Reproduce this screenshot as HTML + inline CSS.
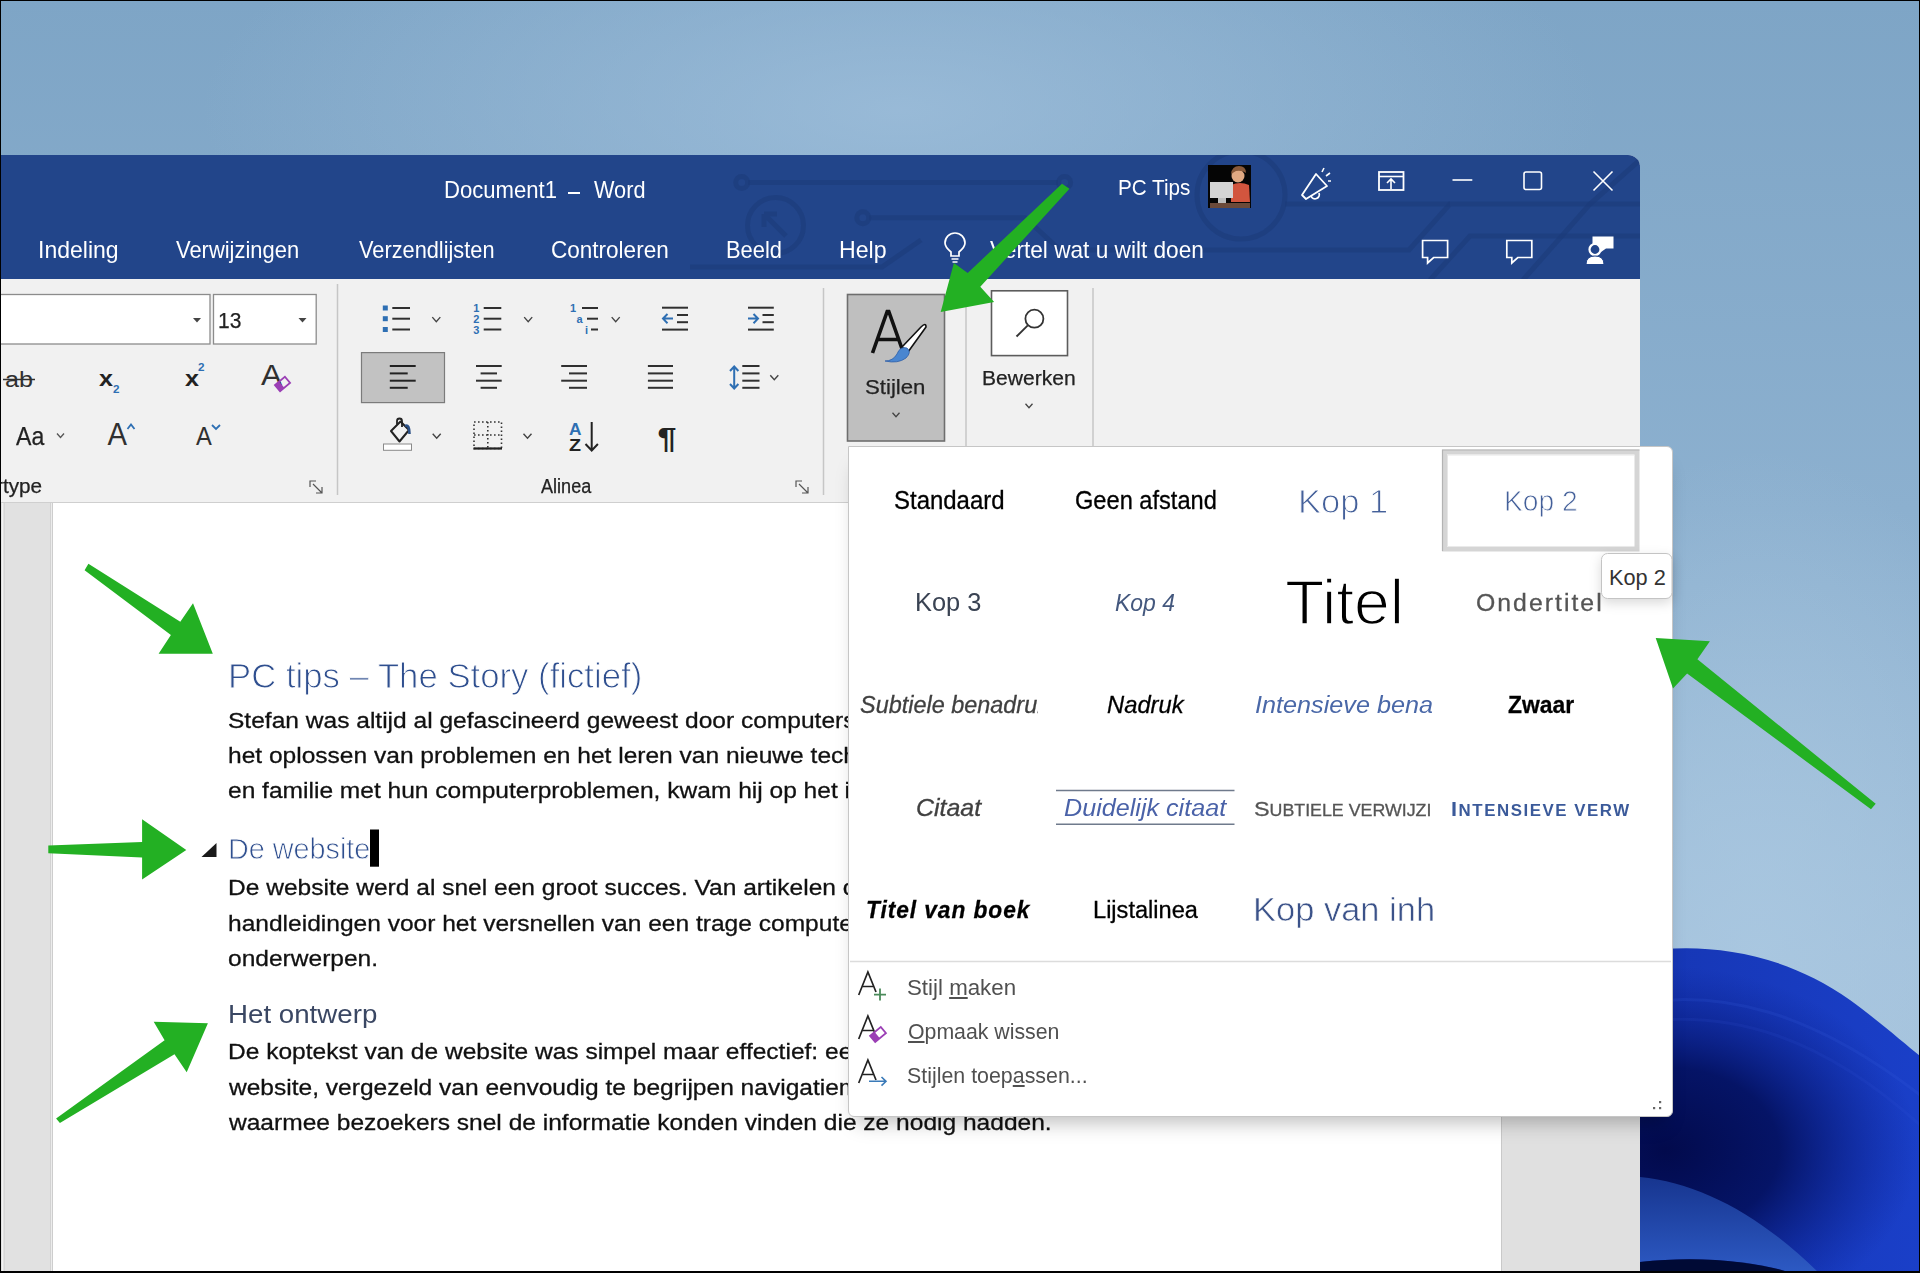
<!DOCTYPE html><html><head><meta charset="utf-8"><style>
html,body{margin:0;padding:0;width:1920px;height:1273px;overflow:hidden;position:relative;font-family:'Liberation Sans',sans-serif;}
div{box-sizing:border-box;}
</style></head><body>
<div style="position:absolute;left:0;top:0;width:1920px;height:1273px;background:
radial-gradient(ellipse 700px 260px at 900px 110px, rgba(160,192,220,0.75), rgba(160,192,220,0) 100%),
radial-gradient(ellipse 300px 500px at 1760px 950px, rgba(170,200,225,0.8), rgba(170,200,225,0) 100%),
linear-gradient(180deg, #7ea5c6 0%, #8cb0cf 40%, #a3c1db 75%, #a8c4dd 100%);"></div>
<svg style="position:absolute;left:0;top:0" width="1920" height="1273" viewBox="0 0 1920 1273">
<defs>
<linearGradient id="bl1" x1="0" y1="0" x2="1" y2="0"><stop offset="0" stop-color="#1636b4"/><stop offset="1" stop-color="#1a3fc8"/></linearGradient>
<radialGradient id="bl2" cx="1665" cy="1150" r="230" gradientUnits="userSpaceOnUse" gradientTransform="translate(1665 1150) scale(1.1 0.8) translate(-1665 -1150)"><stop offset="0" stop-color="#020a4c"/><stop offset="0.45" stop-color="#041262" stop-opacity="0.95"/><stop offset="1" stop-color="#0a2090" stop-opacity="0"/></radialGradient>
<linearGradient id="bl3" x1="0" y1="0" x2="0" y2="1"><stop offset="0" stop-color="#17358f"/><stop offset="1" stop-color="#2d5ac4"/></linearGradient>
</defs>
<path d="M1640 952 C1700 942 1780 950 1850 1000 C1880 1022 1905 1044 1920 1056 L1920 1273 L1640 1273 Z" fill="url(#bl1)"/>
<path d="M1640 952 C1700 942 1780 950 1850 1000 C1880 1022 1905 1044 1920 1056 L1920 1273 L1640 1273 Z" fill="url(#bl2)"/>
<path d="M1640 1003 C1720 990 1810 1010 1920 1095" fill="none" stroke="#3a5ee0" stroke-opacity="0.18" stroke-width="3"/>
<path d="M1640 1022 C1730 1010 1820 1035 1920 1125" fill="none" stroke="#3a5ee0" stroke-opacity="0.12" stroke-width="3"/>
<path d="M1640 1177 C1700 1183 1760 1215 1819 1273 L1791 1273 C1760 1262 1700 1255 1640 1262 Z" fill="url(#bl3)"/>
<path d="M1640 1262 C1700 1255 1760 1262 1791 1273 L1640 1273 Z" fill="#000a35"/>
</svg>
<div style="position:absolute;left:-20px;top:155px;width:1660px;height:1200px;border-top-right-radius:12px;overflow:hidden;background:#f1f1f1;">
<div style="position:absolute;left:0;top:0;width:1660px;height:124px;background:#22458a;"></div>
<svg style="position:absolute;left:0;top:0;overflow:hidden" width="1660" height="124" viewBox="0 0 1660 124"><g transform="translate(20,-155)"><path d="M748 182.6 L1058 182.6" fill="none" stroke="#1b3a78" stroke-opacity="0.55" stroke-width="5"/><circle cx="741.7" cy="182.6" r="6" fill="none" stroke="#1b3a78" stroke-opacity="0.55" stroke-width="5"/><circle cx="1064.6" cy="182.6" r="6" fill="none" stroke="#1b3a78" stroke-opacity="0.55" stroke-width="5"/><path d="M869 217.7 L1025 217.7 L1060 250 L1409 250 L1450 204 L1640 204" fill="none" stroke="#1b3a78" stroke-opacity="0.55" stroke-width="5"/><circle cx="862.8" cy="217.7" r="6" fill="none" stroke="#1b3a78" stroke-opacity="0.55" stroke-width="5"/><circle cx="775.5" cy="225.5" r="28" fill="none" stroke="#1b3a78" stroke-opacity="0.55" stroke-width="5"/><path d="M764 214 L786 236 M764 214 L764 227 M764 214 L777 214" fill="none" stroke="#1b3a78" stroke-opacity="0.55" stroke-width="5"/><circle cx="1241" cy="195" r="44" fill="none" stroke="#1b3a78" stroke-opacity="0.55" stroke-width="5"/><path d="M1285 204 L1450 204" fill="none" stroke="#1b3a78" stroke-opacity="0.55" stroke-width="5"/><path d="M690 267 L882 267 L921 240" fill="none" stroke="#1b3a78" stroke-opacity="0.55" stroke-width="5"/><path d="M1523 280 L1590 204 L1640 160" fill="none" stroke="#1b3a78" stroke-opacity="0.55" stroke-width="5"/><path d="M1430 280 L1470 236 L1640 236" fill="none" stroke="#1b3a78" stroke-opacity="0.55" stroke-width="5"/></g></svg>
<div style="position:absolute;left:0;top:347px;width:1660px;height:1px;background:#cfcfcf;"></div>
<div style="position:absolute;left:0;top:348px;width:73px;height:900px;background:#e1e1e1;"></div>
<div style="position:absolute;left:72px;top:348px;width:1px;height:900px;background:#cdcdcd;"></div>
<div style="position:absolute;left:22px;top:348px;width:1px;height:900px;background:#f2f2f2;"></div>
<div style="position:absolute;left:24px;top:348px;width:1px;height:900px;background:#d6d6d6;"></div>
<div style="position:absolute;left:70px;top:348px;width:1px;height:900px;background:#d2d2d2;"></div>
<div style="position:absolute;left:71px;top:348px;width:1px;height:900px;background:#ececec;"></div>
<div style="position:absolute;left:73px;top:348px;width:1449px;height:900px;background:#fff;"></div>
<div style="position:absolute;left:1521px;top:348px;width:1px;height:900px;background:#c9c9c9;"></div>
<div style="position:absolute;left:1522px;top:348px;width:140px;height:900px;background:#e0e0e0;"></div>
</div>
<svg style="position:absolute;left:0;top:0;overflow:visible" width="1920" height="1273" viewBox="0 0 1920 1273"><rect x="1208" y="165" width="43" height="43" fill="#050505"/><rect x="1210" y="203" width="40" height="5" fill="#6b4a3a"/><path d="M1231 185 Q1240 181 1249 185 L1250 202 L1231 202 Z" fill="#d2553e"/><circle cx="1238" cy="176" r="6.5" fill="#e0a882"/><path d="M1231 174 Q1232 166 1239 166 Q1246 166 1246 173 Q1242 170 1236 171 Z" fill="#8a5a3a"/><rect x="1210" y="182" width="23" height="16" fill="#d4d4d4"/><rect x="1218" y="198" width="8" height="5" fill="#bdbdbd"/><path d="M1302 195 L1316 174 L1327 186 L1306 199 Z" fill="none" stroke="#ffffff" stroke-width="1.8" stroke-linejoin="round"/><path d="M1311 196 A4 4 0 0 0 1319 193" fill="none" stroke="#ffffff" stroke-width="1.8"/><path d="M1322 172 L1324 168 M1326 176 L1330 173 M1328 181 L1331 181" stroke="#ffffff" stroke-width="1.6"/><rect x="1379" y="172" width="24.5" height="18" fill="none" stroke="#ffffff" stroke-width="1.8"/><line x1="1379" y1="176.5" x2="1403.5" y2="176.5" stroke="#ffffff" stroke-width="1.6"/><path d="M1391 189 L1391 179 M1387 183 L1391 179 L1395 183" fill="none" stroke="#ffffff" stroke-width="1.6"/><line x1="1452.5" y1="180" x2="1472.3" y2="180" stroke="#ffffff" stroke-width="1.6"/><rect x="1524" y="172" width="17.5" height="17.5" rx="2" fill="none" stroke="#ffffff" stroke-width="1.6"/><path d="M1593.5 171.5 L1612.5 190.5 M1612.5 171.5 L1593.5 190.5" stroke="#ffffff" stroke-width="1.6"/><path d="M1422.6 240.5 L1447.6 240.5 L1447.6 257.5 L1433.6 257.5 L1427.6 263 L1427.6 257.5 L1422.6 257.5 Z" fill="none" stroke="#ffffff" stroke-width="1.7" stroke-linejoin="miter"/><path d="M1506.8 240.5 L1531.8 240.5 L1531.8 257.5 L1517.8 257.5 L1511.8 263 L1511.8 257.5 L1506.8 257.5 Z" fill="none" stroke="#ffffff" stroke-width="1.7" stroke-linejoin="miter"/><path d="M1592.5 236.5 L1613.5 236.5 L1613.5 248.5 L1606 248.5 L1601 252 L1601 248.5 L1592.5 248.5 Z" fill="#ffffff"/><circle cx="1595" cy="249.5" r="5.5" fill="#22458a" stroke="#ffffff" stroke-width="2.2"/><path d="M1586 264.5 Q1586 256 1595 256 Q1604 256 1604 264.5 Z" fill="#ffffff" stroke="#22458a" stroke-width="1"/><path d="M951 256 L951 252 Q945 247 945 243 A10 10 0 0 1 965 243 Q965 247 959 252 L959 256 Z" fill="none" stroke="#ffffff" stroke-width="1.7"/><line x1="951.5" y1="259" x2="958.5" y2="259" stroke="#ffffff" stroke-width="1.5"/><line x1="952.5" y1="262" x2="957.5" y2="262" stroke="#ffffff" stroke-width="1.5"/><rect x="-2" y="294.5" width="212" height="49.5" fill="#fff" stroke="#8c8c8c" stroke-width="1.3"/><rect x="213.5" y="294.5" width="102.7" height="49.5" fill="#fff" stroke="#8c8c8c" stroke-width="1.3"/><path d="M193 318 L201 318 L197 322.5 Z" fill="#444"/><path d="M298.5 318 L306.5 318 L302.5 322.5 Z" fill="#444"/><line x1="337.5" y1="284" x2="337.5" y2="495" stroke="#c6c6c6" stroke-width="1.5"/><line x1="823.5" y1="288" x2="823.5" y2="495" stroke="#c6c6c6" stroke-width="1.5"/><line x1="966" y1="288" x2="966" y2="446" stroke="#c6c6c6" stroke-width="1.5"/><line x1="1093" y1="288" x2="1093" y2="446" stroke="#c6c6c6" stroke-width="1.5"/><text x="5" y="386.5" font-family="Liberation Sans" font-size="22" fill="#303030" font-weight="normal" font-style="normal" text-anchor="start" textLength="28" lengthAdjust="spacingAndGlyphs">ab</text><line x1="3" y1="379.5" x2="35" y2="379.5" stroke="#303030" stroke-width="1.5"/><text x="99" y="386" font-family="Liberation Sans" font-size="22" fill="#222" font-weight="bold" font-style="normal" text-anchor="start" textLength="14" lengthAdjust="spacingAndGlyphs">x</text><text x="113" y="393" font-family="Liberation Sans" font-size="11" fill="#2e6fb3" font-weight="bold" font-style="normal" text-anchor="start" textLength="6.5" lengthAdjust="spacingAndGlyphs">2</text><text x="185" y="386" font-family="Liberation Sans" font-size="22" fill="#222" font-weight="bold" font-style="normal" text-anchor="start" textLength="14" lengthAdjust="spacingAndGlyphs">x</text><text x="198" y="371" font-family="Liberation Sans" font-size="11" fill="#2e6fb3" font-weight="bold" font-style="normal" text-anchor="start" textLength="6.5" lengthAdjust="spacingAndGlyphs">2</text><text x="261" y="385" font-family="Liberation Sans" font-size="29" fill="#303030" font-weight="normal" font-style="normal" text-anchor="start" textLength="21" lengthAdjust="spacingAndGlyphs">A</text><g transform="translate(282.5 384) rotate(-40)"><rect x="-6.5" y="-4" width="13" height="8" fill="none" stroke="#9b3fb5" stroke-width="1.8"/><rect x="-6.5" y="-4" width="5.5" height="8" fill="#9b3fb5"/></g><path d="M57.0 433.5 L60.5 437.5 L64.0 433.5" fill="none" stroke="#555" stroke-width="1.3"/><text x="107.5" y="445.3" font-family="Liberation Sans" font-size="32" fill="#303030" font-weight="normal" font-style="normal" text-anchor="start" textLength="19.5" lengthAdjust="spacingAndGlyphs">A</text><path d="M127.5 429 L131 424.5 L134.5 429" fill="none" stroke="#2e6fb3" stroke-width="1.8"/><text x="196" y="445.3" font-family="Liberation Sans" font-size="26" fill="#303030" font-weight="normal" font-style="normal" text-anchor="start" textLength="15.8" lengthAdjust="spacingAndGlyphs">A</text><path d="M212 425 L216 429 L220 425" fill="none" stroke="#2e6fb3" stroke-width="1.8"/><path d="M310 487 L310 481 L316 481 M313 484 L322 493 M322 487 L322 493 L316 493" fill="none" stroke="#555" stroke-width="1.2"/><path d="M796 487 L796 481 L802 481 M799 484 L808 493 M808 487 L808 493 L802 493" fill="none" stroke="#555" stroke-width="1.2"/><rect x="382.8" y="305.5" width="5" height="5" fill="#2e6fb3"/><line x1="392.3" y1="308" x2="410" y2="308" stroke="#303030" stroke-width="2"/><rect x="382.8" y="316.2" width="5" height="5" fill="#2e6fb3"/><line x1="392.3" y1="318.7" x2="410" y2="318.7" stroke="#303030" stroke-width="2"/><rect x="382.8" y="327.0" width="5" height="5" fill="#2e6fb3"/><line x1="392.3" y1="329.5" x2="410" y2="329.5" stroke="#303030" stroke-width="2"/><path d="M432.3 317.15 L436.3 321.65 L440.3 317.15" fill="none" stroke="#444" stroke-width="1.4"/><text x="476.3" y="312" font-family="Liberation Sans" font-size="11" fill="#2e6fb3" font-weight="bold" font-style="normal" text-anchor="middle">1</text><line x1="483.7" y1="308" x2="501.3" y2="308" stroke="#303030" stroke-width="2"/><text x="476.3" y="322.7" font-family="Liberation Sans" font-size="11" fill="#2e6fb3" font-weight="bold" font-style="normal" text-anchor="middle">2</text><line x1="483.7" y1="318.7" x2="501.3" y2="318.7" stroke="#303030" stroke-width="2"/><text x="476.3" y="333.5" font-family="Liberation Sans" font-size="11" fill="#2e6fb3" font-weight="bold" font-style="normal" text-anchor="middle">3</text><line x1="483.7" y1="329.5" x2="501.3" y2="329.5" stroke="#303030" stroke-width="2"/><path d="M524.2 317.15 L528.2 321.65 L532.2 317.15" fill="none" stroke="#444" stroke-width="1.4"/><text x="573" y="312" font-family="Liberation Sans" font-size="11" fill="#2e6fb3" font-weight="bold" font-style="normal" text-anchor="middle">1</text><text x="579.6" y="322.5" font-family="Liberation Sans" font-size="11" fill="#2e6fb3" font-weight="bold" font-style="normal" text-anchor="middle">a</text><text x="586.6" y="333.5" font-family="Liberation Sans" font-size="11" fill="#2e6fb3" font-weight="bold" font-style="normal" text-anchor="middle">i</text><line x1="582" y1="308" x2="598" y2="308" stroke="#303030" stroke-width="2"/><line x1="587" y1="318.7" x2="598" y2="318.7" stroke="#303030" stroke-width="2"/><line x1="591" y1="329.5" x2="598" y2="329.5" stroke="#303030" stroke-width="2"/><path d="M611.7 317.15 L615.7 321.65 L619.7 317.15" fill="none" stroke="#444" stroke-width="1.4"/><line x1="662" y1="307.7" x2="688" y2="307.7" stroke="#303030" stroke-width="2"/><line x1="677" y1="315" x2="688" y2="315" stroke="#303030" stroke-width="2"/><line x1="677" y1="322.2" x2="688" y2="322.2" stroke="#303030" stroke-width="2"/><line x1="662" y1="329.6" x2="688" y2="329.6" stroke="#303030" stroke-width="2"/><line x1="748" y1="307.7" x2="773.8" y2="307.7" stroke="#303030" stroke-width="2"/><line x1="762.5" y1="315" x2="773.8" y2="315" stroke="#303030" stroke-width="2"/><line x1="762.5" y1="322.2" x2="773.8" y2="322.2" stroke="#303030" stroke-width="2"/><line x1="748" y1="329.6" x2="773.8" y2="329.6" stroke="#303030" stroke-width="2"/><path d="M673 318.6 L663 318.6 M667.5 314 L663 318.6 L667.5 323.2" fill="none" stroke="#2e6fb3" stroke-width="2"/><path d="M748 318.6 L758 318.6 M753.5 314 L758 318.6 L753.5 323.2" fill="none" stroke="#2e6fb3" stroke-width="2"/><rect x="361.5" y="352.6" width="83" height="50" fill="#c2c2c2" stroke="#7b7b7b" stroke-width="1.2"/><line x1="389.8" y1="366" x2="415.7" y2="366" stroke="#222" stroke-width="2"/><line x1="476" y1="366" x2="501.7" y2="366" stroke="#303030" stroke-width="2"/><line x1="561.2" y1="366" x2="587" y2="366" stroke="#303030" stroke-width="2"/><line x1="647.9" y1="366" x2="673" y2="366" stroke="#303030" stroke-width="2"/><line x1="742.3" y1="366" x2="759.5" y2="366" stroke="#303030" stroke-width="2"/><line x1="389.8" y1="373.4" x2="407.7" y2="373.4" stroke="#222" stroke-width="2"/><line x1="480.6" y1="373.4" x2="497" y2="373.4" stroke="#303030" stroke-width="2"/><line x1="569" y1="373.4" x2="587" y2="373.4" stroke="#303030" stroke-width="2"/><line x1="647.9" y1="373.4" x2="673" y2="373.4" stroke="#303030" stroke-width="2"/><line x1="742.3" y1="373.4" x2="759.5" y2="373.4" stroke="#303030" stroke-width="2"/><line x1="389.8" y1="380.7" x2="415.7" y2="380.7" stroke="#222" stroke-width="2"/><line x1="476" y1="380.7" x2="501.7" y2="380.7" stroke="#303030" stroke-width="2"/><line x1="561.2" y1="380.7" x2="587" y2="380.7" stroke="#303030" stroke-width="2"/><line x1="647.9" y1="380.7" x2="673" y2="380.7" stroke="#303030" stroke-width="2"/><line x1="742.3" y1="380.7" x2="759.5" y2="380.7" stroke="#303030" stroke-width="2"/><line x1="389.8" y1="387.8" x2="407.7" y2="387.8" stroke="#222" stroke-width="2"/><line x1="480.6" y1="387.8" x2="497" y2="387.8" stroke="#303030" stroke-width="2"/><line x1="569" y1="387.8" x2="587" y2="387.8" stroke="#303030" stroke-width="2"/><line x1="647.9" y1="387.8" x2="673" y2="387.8" stroke="#303030" stroke-width="2"/><line x1="742.3" y1="387.8" x2="759.5" y2="387.8" stroke="#303030" stroke-width="2"/><path d="M734.2 367 L734.2 388 M730 371 L734.2 366.5 L738.4 371 M730 384 L734.2 388.5 L738.4 384" fill="none" stroke="#2e6fb3" stroke-width="2"/><path d="M770.3 375.25 L774.3 379.75 L778.3 375.25" fill="none" stroke="#444" stroke-width="1.4"/><path d="M391 431 L400.5 421.5 L409 430 L399.5 441.5 Z" fill="none" stroke="#222" stroke-width="2" stroke-linejoin="round"/><path d="M397 424.5 L397 421 Q397 418.5 399.5 418.5 Q402 418.5 402 421 L402 427" fill="none" stroke="#222" stroke-width="1.8"/><path d="M405 426 Q409.5 424 409.5 434" fill="none" stroke="#2a4f85" stroke-width="2.6"/><rect x="383.5" y="444" width="28" height="6.3" fill="#fff" stroke="#8a8a8a" stroke-width="1"/><path d="M432.7 433.75 L436.7 438.25 L440.7 433.75" fill="none" stroke="#444" stroke-width="1.4"/><rect x="474" y="422" width="27.5" height="26.5" fill="none" stroke="#333" stroke-width="1.6" stroke-dasharray="1.6 2.4"/><path d="M487.8 422 L487.8 448 M474 435 L501.5 435" fill="none" stroke="#333" stroke-width="1.6" stroke-dasharray="1.6 2.4"/><line x1="473.5" y1="448.5" x2="502" y2="448.5" stroke="#222" stroke-width="2.2"/><path d="M523.5 433.75 L527.5 438.25 L531.5 433.75" fill="none" stroke="#444" stroke-width="1.4"/><text x="569" y="434.5" font-family="Liberation Sans" font-size="16" fill="#2e6fb3" font-weight="bold" font-style="normal" text-anchor="start" textLength="12.5" lengthAdjust="spacingAndGlyphs">A</text><text x="569" y="451" font-family="Liberation Sans" font-size="17" fill="#222" font-weight="bold" font-style="normal" text-anchor="start" textLength="12" lengthAdjust="spacingAndGlyphs">Z</text><path d="M591.7 422 L591.7 450.5 M585.5 444 L591.7 450.5 L597.9 444" fill="none" stroke="#222" stroke-width="2"/><text x="657.5" y="447.5" font-family="Liberation Sans" font-size="29" fill="#222" font-weight="bold" font-style="normal" text-anchor="start" textLength="19" lengthAdjust="spacingAndGlyphs">¶</text><rect x="847.5" y="294.5" width="97" height="146.5" fill="#bfbfbf" stroke="#6e6e6e" stroke-width="1.6"/><path d="M872.5 353 L887.2 311.5 L888.8 311.5 L903.5 353 M877.5 339.5 L898.5 339.5" fill="none" stroke="#111" stroke-width="3.6" stroke-linejoin="miter"/><path d="M902 347 L921 327 Q926 322 926 327 L908 352 Z" fill="#fff" stroke="#111" stroke-width="1.6" stroke-linejoin="round"/><path d="M885 361 Q893 361 897 354 Q900 346 907 348 Q912 352 906 358 Q898 364 885 361 Z" fill="#4a86d0" stroke="#2f5fa8" stroke-width="0.8"/><path d="M892.5 412.8 L896 416.8 L899.5 412.8" fill="none" stroke="#444" stroke-width="1.3"/><rect x="991.5" y="290.8" width="76" height="64.8" fill="#fff" stroke="#5c5c5c" stroke-width="1.6"/><circle cx="1034.4" cy="318.7" r="9" fill="none" stroke="#333" stroke-width="1.8"/><line x1="1027.8" y1="325.3" x2="1016.5" y2="336.5" stroke="#333" stroke-width="1.9"/><path d="M1025.5 403.8 L1029 407.8 L1032.5 403.8" fill="none" stroke="#444" stroke-width="1.3"/><rect x="568" y="192" width="12" height="2" fill="#fff"/></svg>
<div style="position:absolute;left:443.69px;top:179.29px;font-size:23.19px;line-height:1;white-space:nowrap;transform-origin:0 0;transform:scaleX(0.9534);color:#fff;">Document1</div>
<div style="position:absolute;left:594.40px;top:179.29px;font-size:23.19px;line-height:1;white-space:nowrap;transform-origin:0 0;transform:scaleX(0.9370);color:#fff;">Word</div>
<div style="position:absolute;left:1117.96px;top:176.91px;font-size:22.46px;line-height:1;white-space:nowrap;transform-origin:0 0;transform:scaleX(0.9211);color:#fff;">PC Tips</div>
<div style="position:absolute;left:37.52px;top:239.29px;font-size:23.19px;line-height:1;white-space:nowrap;transform-origin:0 0;transform:scaleX(0.9923);color:#fff;">Indeling</div>
<div style="position:absolute;left:176.00px;top:239.29px;font-size:23.19px;line-height:1;white-space:nowrap;transform-origin:0 0;transform:scaleX(0.9457);color:#fff;">Verwijzingen</div>
<div style="position:absolute;left:358.50px;top:239.29px;font-size:23.19px;line-height:1;white-space:nowrap;transform-origin:0 0;transform:scaleX(0.9385);color:#fff;">Verzendlijsten</div>
<div style="position:absolute;left:551.03px;top:239.29px;font-size:23.19px;line-height:1;white-space:nowrap;transform-origin:0 0;transform:scaleX(0.9714);color:#fff;">Controleren</div>
<div style="position:absolute;left:725.91px;top:239.29px;font-size:23.19px;line-height:1;white-space:nowrap;transform-origin:0 0;transform:scaleX(0.9446);color:#fff;">Beeld</div>
<div style="position:absolute;left:838.80px;top:239.29px;font-size:23.19px;line-height:1;white-space:nowrap;transform-origin:0 0;transform:scaleX(0.9978);color:#fff;">Help</div>
<div style="position:absolute;left:990.00px;top:239.29px;font-size:23.19px;line-height:1;white-space:nowrap;transform-origin:0 0;transform:scaleX(0.9761);color:#fff;">Vertel wat u wilt doen</div>
<div style="position:absolute;left:217.66px;top:310.03px;font-size:22.32px;line-height:1;white-space:nowrap;transform-origin:0 0;transform:scaleX(0.9435);color:#222;-webkit-text-stroke:0.25px #222;">13</div>
<div style="position:absolute;left:-4.06px;top:476.87px;font-size:19.57px;line-height:1;white-space:nowrap;transform-origin:0 0;transform:scaleX(1.0595);color:#222;-webkit-text-stroke:0.25px #222;">rtype</div>
<div style="position:absolute;left:540.50px;top:476.87px;font-size:19.57px;line-height:1;white-space:nowrap;transform-origin:0 0;transform:scaleX(0.9236);color:#222;-webkit-text-stroke:0.25px #222;">Alinea</div>
<div style="position:absolute;left:865.24px;top:376.14px;font-size:21.01px;line-height:1;white-space:nowrap;transform-origin:0 0;transform:scaleX(1.0564);color:#222;-webkit-text-stroke:0.25px #222;">Stijlen</div>
<div style="position:absolute;left:982.26px;top:368.15px;font-size:20.29px;line-height:1;white-space:nowrap;transform-origin:0 0;transform:scaleX(1.0382);color:#222;-webkit-text-stroke:0.25px #222;">Bewerken</div>
<div style="position:absolute;left:16.30px;top:422.76px;font-size:26.52px;line-height:1;white-space:nowrap;transform-origin:0 0;transform:scaleX(0.8697);color:#222;-webkit-text-stroke:0.25px #222;">Aa</div>
<div style="position:absolute;left:227.88px;top:658.70px;font-size:35.65px;line-height:1;white-space:nowrap;transform-origin:0 0;transform:scaleX(0.9743);color:#2f4f8f;-webkit-text-stroke:1px #fff;">PC tips – The Story (fictief)</div>
<div style="position:absolute;left:229.00px;top:1110.54px;font-size:22.9px;line-height:1;white-space:nowrap;transform-origin:0 0;transform:scaleX(1.0721);color:#111;-webkit-text-stroke:0.3px #111;">waarmee bezoekers snel de informatie konden vinden die ze nodig hadden.</div>
<div style="position:absolute;left:227.93px;top:708.83px;font-size:22.9px;line-height:1;white-space:nowrap;transform-origin:0 0;transform:scaleX(1.0721);color:#111;-webkit-text-stroke:0.3px #111;">Stefan was altijd al gefascineerd geweest door computers en technologie.</div>
<div style="position:absolute;left:227.93px;top:743.83px;font-size:22.9px;line-height:1;white-space:nowrap;transform-origin:0 0;transform:scaleX(1.0721);color:#111;-webkit-text-stroke:0.3px #111;">het oplossen van problemen en het leren van nieuwe technologie.</div>
<div style="position:absolute;left:227.93px;top:778.83px;font-size:22.9px;line-height:1;white-space:nowrap;transform-origin:0 0;transform:scaleX(1.0721);color:#111;-webkit-text-stroke:0.3px #111;">en familie met hun computerproblemen, kwam hij op het idee.</div>
<div style="position:absolute;left:227.93px;top:876.03px;font-size:22.9px;line-height:1;white-space:nowrap;transform-origin:0 0;transform:scaleX(1.0721);color:#111;-webkit-text-stroke:0.3px #111;">De website werd al snel een groot succes. Van artikelen over</div>
<div style="position:absolute;left:227.93px;top:912.03px;font-size:22.9px;line-height:1;white-space:nowrap;transform-origin:0 0;transform:scaleX(1.0721);color:#111;-webkit-text-stroke:0.3px #111;">handleidingen voor het versnellen van een trage computer</div>
<div style="position:absolute;left:227.93px;top:946.53px;font-size:22.9px;line-height:1;white-space:nowrap;transform-origin:0 0;transform:scaleX(1.0721);color:#111;-webkit-text-stroke:0.3px #111;">onderwerpen.</div>
<div style="position:absolute;left:227.93px;top:1039.74px;font-size:22.9px;line-height:1;white-space:nowrap;transform-origin:0 0;transform:scaleX(1.0721);color:#111;-webkit-text-stroke:0.3px #111;">De koptekst van de website was simpel maar effectief: een</div>
<div style="position:absolute;left:229.00px;top:1075.54px;font-size:22.9px;line-height:1;white-space:nowrap;transform-origin:0 0;transform:scaleX(1.0721);color:#111;-webkit-text-stroke:0.3px #111;">website, vergezeld van eenvoudig te begrijpen navigatiemenu</div>
<div style="position:absolute;left:227.67px;top:834.29px;font-size:29.42px;line-height:1;white-space:nowrap;transform-origin:0 0;transform:scaleX(0.9780);color:#2f4f8f;-webkit-text-stroke:0.8px #fff;">De website</div>
<div style="position:absolute;left:227.82px;top:1001.74px;font-size:25.36px;line-height:1;white-space:nowrap;transform-origin:0 0;transform:scaleX(1.0918);color:#3a4763;">Het ontwerp</div>
<svg style="position:absolute;left:0;top:0;overflow:visible" width="1920" height="1273" viewBox="0 0 1920 1273"><path d="M201.5 857 L216.5 857 L216.5 843 Z" fill="#1a1a1a"/><rect x="370" y="829.5" width="9" height="37.2" fill="#000"/></svg>
<div style="position:absolute;left:848px;top:446px;width:825px;height:671px;background:#fff;border:1px solid #c6c6c6;border-radius:0 6px 6px 6px;box-shadow:0 14px 18px -8px rgba(0,0,0,0.25);"></div>
<svg style="position:absolute;left:0;top:0;overflow:visible" width="1920" height="1273" viewBox="0 0 1920 1273"><rect x="1444.5" y="452" width="192.5" height="97" fill="none" stroke="#d5d5d5" stroke-width="5"/><path d="M1442.5 551 L1442.5 450 L1639.5 450" fill="none" stroke="#b3b3b3" stroke-width="1.2"/><path d="M1447.5 546 L1447.5 455 L1634 455" fill="none" stroke="#e6e6e6" stroke-width="1"/><line x1="1056" y1="790.5" x2="1234.5" y2="790.5" stroke="#6f7a8c" stroke-width="1.4"/><line x1="1056" y1="824.3" x2="1234.5" y2="824.3" stroke="#6f7a8c" stroke-width="1.4"/><line x1="850" y1="961.5" x2="1671" y2="961.5" stroke="#dcdcdc" stroke-width="1.3"/><path d="M858.7 995 L867.9 972 L876 992" fill="none" stroke="#222" stroke-width="1.7" stroke-linejoin="miter"/><line x1="862.5" y1="986.5" x2="873" y2="986.5" stroke="#222" stroke-width="1.5"/><path d="M858.7 1039 L867.9 1016 L876 1036" fill="none" stroke="#222" stroke-width="1.7" stroke-linejoin="miter"/><line x1="862.5" y1="1030.5" x2="873" y2="1030.5" stroke="#222" stroke-width="1.5"/><path d="M858.7 1083 L867.9 1060 L876 1080" fill="none" stroke="#222" stroke-width="1.7" stroke-linejoin="miter"/><line x1="862.5" y1="1074.5" x2="873" y2="1074.5" stroke="#222" stroke-width="1.5"/><path d="M874 994.6 L886 994.6 M880 988.6 L880 1000.6" stroke="#4a8a5a" stroke-width="1.8"/><g transform="translate(878 1034.5) rotate(-40)"><rect x="-7" y="-4" width="14" height="8" fill="#fff" stroke="#9b3fb5" stroke-width="1.8"/><rect x="-7" y="-4" width="6" height="8" fill="#9b3fb5"/></g><path d="M869 1081.3 L886 1081.3 M881.5 1077 L886 1081.3 L881.5 1085.6" fill="none" stroke="#3a7ab8" stroke-width="1.6"/><rect x="1659" y="1101" width="2.2" height="2.2" fill="#666"/><rect x="1659" y="1107" width="2.2" height="2.2" fill="#666"/><rect x="1653" y="1107" width="2.2" height="2.2" fill="#666"/><rect x="1601.5" y="553.5" width="70.5" height="45" rx="6" fill="#fff" stroke="#c4c4c4" stroke-width="1" style="filter:drop-shadow(0 4px 6px rgba(0,0,0,0.15))"/></svg>
<div style="position:absolute;left:893.65px;top:488.16px;font-size:25.22px;line-height:1;white-space:nowrap;transform-origin:0 0;transform:scaleX(0.9500);color:#000;-webkit-text-stroke:0.3px #000;">Standaard</div>
<div style="position:absolute;left:1074.76px;top:488.16px;font-size:25.22px;line-height:1;white-space:nowrap;transform-origin:0 0;transform:scaleX(0.9367);color:#000;-webkit-text-stroke:0.3px #000;">Geen afstand</div>
<div style="position:absolute;left:1298.16px;top:483.55px;font-size:34.06px;line-height:1;white-space:nowrap;transform-origin:0 0;transform:scaleX(1.0131);color:#44609a;-webkit-text-stroke:1px #fff;">Kop 1</div>
<div style="position:absolute;left:1503.78px;top:486.96px;font-size:28.99px;line-height:1;white-space:nowrap;transform-origin:0 0;transform:scaleX(0.9718);color:#44609a;-webkit-text-stroke:0.8px #fff;">Kop 2</div>
<div style="position:absolute;left:915.25px;top:589.02px;font-size:26.09px;line-height:1;white-space:nowrap;transform-origin:0 0;transform:scaleX(0.9738);color:#3a4353;">Kop 3</div>
<div style="position:absolute;left:1115.44px;top:590.68px;font-size:23.91px;line-height:1;white-space:nowrap;transform-origin:0 0;transform:scaleX(0.9607);color:#44587e;"><i>Kop 4</i></div>
<div style="position:absolute;left:1284.94px;top:572.03px;font-size:62.32px;line-height:1;white-space:nowrap;transform-origin:0 0;transform:scaleX(1.0321);color:#000;-webkit-text-stroke:1.6px #fff;">Titel</div>
<div style="position:absolute;left:1476.49px;top:590.76px;font-size:24.64px;line-height:1;white-space:nowrap;transform-origin:0 0;transform:scaleX(1.0073);color:#555;-webkit-text-stroke:0.3px #555;letter-spacing:2px;">Ondertitel</div>
<div style="position:absolute;left:850px;top:0;width:188px;height:1273px;overflow:hidden"><div style="position:absolute;left:-850px;top:0"><div style="position:absolute;left:860.40px;top:692.60px;font-size:24.35px;line-height:1;white-space:nowrap;transform-origin:0 0;transform:scaleX(0.9625);color:#404040;-webkit-text-stroke:0.3px #404040;"><i>Subtiele benadrukking</i></div></div></div>
<div style="position:absolute;left:1107.30px;top:692.60px;font-size:24.35px;line-height:1;white-space:nowrap;transform-origin:0 0;transform:scaleX(0.9763);color:#000;-webkit-text-stroke:0.3px #000;"><i>Nadruk</i></div>
<div style="position:absolute;left:1244px;top:0;width:188px;height:1273px;overflow:hidden"><div style="position:absolute;left:-1244px;top:0"><div style="position:absolute;left:1254.56px;top:692.60px;font-size:24.35px;line-height:1;white-space:nowrap;transform-origin:0 0;transform:scaleX(1.0359);color:#4a68a8;"><i>Intensieve benadrukking</i></div></div></div>
<div style="position:absolute;left:1507.70px;top:692.60px;font-size:24.35px;line-height:1;white-space:nowrap;transform-origin:0 0;transform:scaleX(0.9394);color:#000;-webkit-text-stroke:0.3px #000;"><b>Zwaar</b></div>
<div style="position:absolute;left:915.73px;top:796.59px;font-size:23.19px;line-height:1;white-space:nowrap;transform-origin:0 0;transform:scaleX(1.0738);color:#404040;-webkit-text-stroke:0.3px #404040;"><i>Citaat</i></div>
<div style="position:absolute;left:1063.65px;top:795.98px;font-size:23.91px;line-height:1;white-space:nowrap;transform-origin:0 0;transform:scaleX(1.0519);color:#4a62a8;"><i>Duidelijk citaat</i></div>
<div style="position:absolute;left:1244px;top:0;width:187px;height:1273px;overflow:hidden"><div style="position:absolute;left:-1244px;top:0"><div style="position:absolute;left:1254.49px;top:797.94px;font-size:21.01px;line-height:1;white-space:nowrap;transform-origin:0 0;transform:scaleX(1.1146);color:#555;-webkit-text-stroke:0.3px #555;">S<span style="font-size:76%">UBTIELE VERWIJZING</span></div></div></div>
<div style="position:absolute;left:1441px;top:0;width:189px;height:1273px;overflow:hidden"><div style="position:absolute;left:-1441px;top:0"><div style="position:absolute;left:1451.47px;top:797.94px;font-size:21.01px;line-height:1;white-space:nowrap;transform-origin:0 0;transform:scaleX(1.0297);color:#3b5a9a;letter-spacing:1.5px;"><b>I<span style="font-size:78%">NTENSIEVE VERWIJZING</span></b></div></div></div>
<div style="position:absolute;left:866.25px;top:898.08px;font-size:23.91px;line-height:1;white-space:nowrap;transform-origin:0 0;transform:scaleX(0.9500);color:#000;-webkit-text-stroke:0.3px #000;letter-spacing:1px;"><b><i>Titel van boek</i></b></div>
<div style="position:absolute;left:1092.76px;top:898.08px;font-size:23.91px;line-height:1;white-space:nowrap;transform-origin:0 0;transform:scaleX(0.9873);color:#000;-webkit-text-stroke:0.3px #000;">Lijstalinea</div>
<div style="position:absolute;left:1244px;top:0;width:189px;height:1273px;overflow:hidden"><div style="position:absolute;left:-1244px;top:0"><div style="position:absolute;left:1253.08px;top:894.48px;font-size:32.61px;line-height:1;white-space:nowrap;transform-origin:0 0;transform:scaleX(1.0572);color:#3b5289;-webkit-text-stroke:0.6px #fff;">Kop van inhoudsopgave</div></div></div>
<div style="position:absolute;left:907.27px;top:977.32px;font-size:21.74px;line-height:1;white-space:nowrap;transform-origin:0 0;transform:scaleX(1.0260);color:#505050;">Stijl <u>m</u>aken</div>
<div style="position:absolute;left:908.00px;top:1021.02px;font-size:21.74px;line-height:1;white-space:nowrap;transform-origin:0 0;transform:scaleX(0.9792);color:#505050;"><u>O</u>pmaak wissen</div>
<div style="position:absolute;left:907.02px;top:1064.82px;font-size:21.74px;line-height:1;white-space:nowrap;transform-origin:0 0;transform:scaleX(0.9834);color:#505050;">Stijlen toep<u>a</u>ssen...</div>
<div style="position:absolute;left:1609.00px;top:566.52px;font-size:21.74px;line-height:1;white-space:nowrap;transform-origin:0 0;transform:scaleX(1.0000);color:#333;">Kop 2</div>
<svg style="position:absolute;left:0;top:0;overflow:visible" width="1920" height="1273" viewBox="0 0 1920 1273"><polygon points="88.4,563.7 180.3,621.7 193,603.3 212.8,653.7 158.6,653.7 170.9,634.9 84.6,570.3" fill="#23b023"/><polygon points="48.3,845.4 142.1,842.1 142.1,819.2 186.3,850 142.1,879.6 142.1,857.5 48.3,853.3" fill="#23b023"/><polygon points="56.1,1118.4 164.6,1040.2 153.7,1021.8 207.9,1023.2 186.7,1072.2 174.5,1054.3 59.9,1123.1" fill="#23b023"/><polygon points="1069.5,188.8 980.3,286.8 994.1,301.9 940.7,312 953.9,263 967.7,273 1062,183.8" fill="#23b023"/><polygon points="1875.7,803.8 1697.4,659.3 1709.9,641.2 1655.7,638.1 1673,688.4 1687.1,673.4 1871,809.3" fill="#23b023"/></svg>
<div style="position:absolute;left:0;top:0;width:1920px;height:1273px;border:1px solid #000;border-bottom-width:2px;pointer-events:none"></div>
</body></html>
